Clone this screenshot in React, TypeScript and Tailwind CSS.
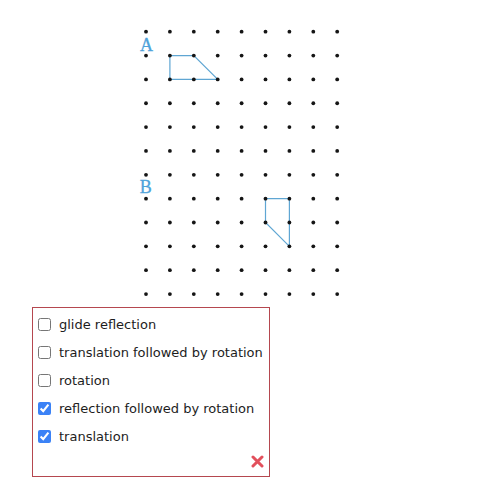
import { useState } from 'react';

const COLS = 9;
const ROWS = 12;
const X0 = 16;
const Y0 = 11.7;
const STEP_X = 23.9;
const STEP_Y = 23.85;

const px = (c: number) => X0 + c * STEP_X;
const py = (r: number) => Y0 + r * STEP_Y;

const shapeA: [number, number][] = [[1, 1], [2, 1], [3, 2], [1, 2]];
const shapeB: [number, number][] = [[5, 7], [6, 7], [6, 9], [5, 8]];

const options = [
  { label: 'glide reflection', checked: false },
  { label: 'translation followed by rotation', checked: false },
  { label: 'rotation', checked: false },
  { label: 'reflection followed by rotation', checked: true },
  { label: 'translation', checked: true },
];

function DotGrid() {
  const dots = [];
  for (let r = 0; r < ROWS; r++) {
    for (let c = 0; c < COLS; c++) {
      dots.push(<circle key={`${r}-${c}`} cx={px(c)} cy={py(r)} r={1.9} fill="#151515" />);
    }
  }
  const pts = (s: [number, number][]) => s.map(([c, r]) => `${px(c)},${py(r)}`).join(' ');

  return (
    <svg width="220" height="282" className="block ml-[130px]">
      <polygon points={pts(shapeA)} fill="none" stroke="#5fa6d3" strokeWidth="1.2" />
      <polygon points={pts(shapeB)} fill="none" stroke="#5fa6d3" strokeWidth="1.2" />
      {dots}
      <text x="16.5" y="31" textAnchor="middle" fontFamily="'Liberation Serif', serif" fontSize="18" fill="#4ea2da" stroke="#4ea2da" strokeWidth="0.3">
        A
      </text>
      <text x="15.8" y="173" textAnchor="middle" fontFamily="'Liberation Serif', serif" fontSize="18" fill="#4ea2da" stroke="#4ea2da" strokeWidth="0.3">
        B
      </text>
    </svg>
  );
}

export default function App() {
  const [checked, setChecked] = useState(options.map((o) => o.checked));

  return (
    <div className="w-[501px] h-[495px] bg-white pt-[20px] font-['DejaVu_Sans',sans-serif]">
      <DotGrid />

      {/* Answer choices */}
      <div className="ml-[32px] mt-[5px] w-[238px] h-[170px] border border-[#b5474f] pt-[2px]">
        {options.map((opt, i) => (
          <label key={opt.label} className="flex items-center h-[28px] pl-[5px] gap-[8px] cursor-pointer">
            <input
              type="checkbox"
              checked={checked[i]}
              onChange={() => setChecked(checked.map((v, j) => (j === i ? !v : v)))}
              className="m-0 w-[13px] h-[13px] accent-[#3b82f6]"
            />
            <span className="text-[13px] text-[#1d1d1d] leading-none">{opt.label}</span>
          </label>
        ))}
        <div className="flex justify-end pt-[5px] pr-[5px]">
          <svg width="13" height="13" viewBox="0 0 13 13">
            <path d="M2 2 L11 11 M11 2 L2 11" stroke="#e2505c" strokeWidth="3" strokeLinecap="round" />
          </svg>
        </div>
      </div>
    </div>
  );
}
